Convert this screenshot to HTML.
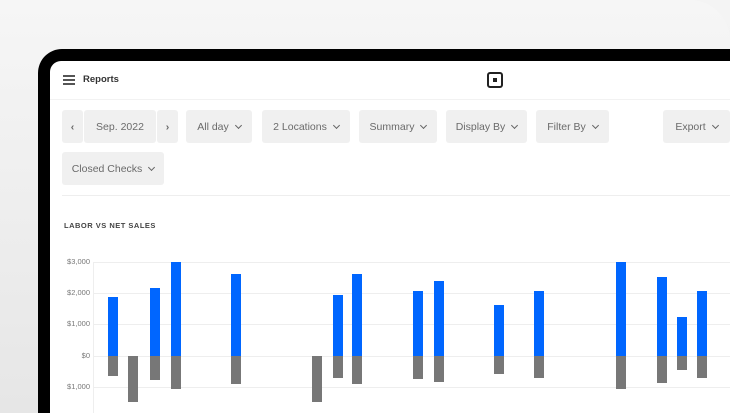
<!DOCTYPE html>
<html><head><style>
*{margin:0;padding:0;box-sizing:border-box}
html,body{width:730px;height:413px;overflow:hidden}
body{background:linear-gradient(#f4f4f4,#ebebeb);font-family:"Liberation Sans",sans-serif;position:relative}
.card{position:absolute;left:0;top:0;width:730px;height:413px;background:linear-gradient(#f6f6f6,#e6e6e6);border-radius:0 40px 0 0}
.bezel{position:absolute;left:38px;top:49px;width:692px;height:364px;background:#000;border-radius:24px 0 0 0}
.screen{position:absolute;left:50px;top:61px;width:680px;height:352px;background:#fff;border-radius:11px 0 0 0;overflow:hidden}
.abs{position:absolute}
.btn{position:absolute;height:33px;background:#f0f0f0;border-radius:3px;color:#6a6a6a;font-size:10.5px;display:flex;align-items:center;justify-content:center}
.chev{display:inline-block;width:5px;height:5px;border-right:1.5px solid #666;border-bottom:1.5px solid #666;transform:rotate(45deg);margin-left:7px;margin-top:-3px}
.grid{position:absolute;left:43px;width:640px;height:1px;background:#eee}
.yl{position:absolute;left:0;width:40px;text-align:right;font-size:7.5px;color:#777}
.b{position:absolute;width:10px;background:#0066ff}
.g{position:absolute;width:10px;background:#777}
</style></head><body>
<div class="card"></div>
<div class="bezel"></div>
<div class="screen">
 <div class="abs" style="left:13px;top:14px;width:12px;height:2px;background:#555;box-shadow:0 4px 0 #555,0 8px 0 #555"></div>
 <div class="abs" style="left:33px;top:13px;font-size:9.5px;font-weight:bold;color:#333">Reports</div>
 <div class="abs" style="left:437px;top:11px;width:16px;height:16px;border:2.5px solid #222;border-radius:3px"><div style="position:absolute;left:3.5px;top:3.5px;width:4px;height:4px;background:#222"></div></div>
 <div class="abs" style="left:0;top:38px;width:680px;height:1px;background:#f2f2f2"></div>
 <div class="btn" style="left:12px;top:49px;width:21px;font-weight:bold">‹</div>
 <div class="btn" style="left:34px;top:49px;width:72px">Sep. 2022</div>
 <div class="btn" style="left:107px;top:49px;width:21px;font-weight:bold">›</div>
 <div class="btn" style="left:136px;top:49px;width:66px">All day<span class="chev"></span></div>
 <div class="btn" style="left:212px;top:49px;width:88px">2 Locations<span class="chev"></span></div>
 <div class="btn" style="left:309px;top:49px;width:78px">Summary<span class="chev"></span></div>
 <div class="btn" style="left:396px;top:49px;width:81px">Display By<span class="chev"></span></div>
 <div class="btn" style="left:486px;top:49px;width:73px">Filter By<span class="chev"></span></div>
 <div class="btn" style="left:613px;top:49px;width:67px">Export<span class="chev"></span></div>
 <div class="btn" style="left:12px;top:91px;width:102px">Closed Checks<span class="chev"></span></div>
 <div class="abs" style="left:12px;top:134px;width:668px;height:1px;background:#eee"></div>
 <div class="abs" style="left:14px;top:160px;font-size:7.5px;font-weight:bold;letter-spacing:.5px;color:#444">LABOR VS NET SALES</div>
 <div class="grid" style="top:201px"></div><div class="yl" style="top:196px">$3,000</div>
 <div class="grid" style="top:232px"></div><div class="yl" style="top:227px">$2,000</div>
 <div class="grid" style="top:263px"></div><div class="yl" style="top:258px">$1,000</div>
 <div class="grid" style="top:295px"></div><div class="yl" style="top:290px">$0</div>
 <div class="grid" style="top:326px"></div><div class="yl" style="top:321px">$1,000</div>
 <div class="abs" style="left:43px;top:201px;width:1px;height:151px;background:#eee"></div>
 <div class="b" style="left:58px;top:236px;height:59px"></div><div class="g" style="left:58px;top:295px;height:20px"></div>
 <div class="g" style="left:78px;top:295px;height:46px"></div>
 <div class="b" style="left:100px;top:227px;height:68px"></div><div class="g" style="left:100px;top:295px;height:24px"></div>
 <div class="b" style="left:121px;top:201px;height:94px"></div><div class="g" style="left:121px;top:295px;height:33px"></div>
 <div class="b" style="left:181px;top:213px;height:82px"></div><div class="g" style="left:181px;top:295px;height:28px"></div>
 <div class="g" style="left:262px;top:295px;height:46px"></div>
 <div class="b" style="left:283px;top:234px;height:61px"></div><div class="g" style="left:283px;top:295px;height:22px"></div>
 <div class="b" style="left:302px;top:213px;height:82px"></div><div class="g" style="left:302px;top:295px;height:28px"></div>
 <div class="b" style="left:363px;top:230px;height:65px"></div><div class="g" style="left:363px;top:295px;height:23px"></div>
 <div class="b" style="left:384px;top:220px;height:75px"></div><div class="g" style="left:384px;top:295px;height:26px"></div>
 <div class="b" style="left:444px;top:244px;height:51px"></div><div class="g" style="left:444px;top:295px;height:18px"></div>
 <div class="b" style="left:484px;top:230px;height:65px"></div><div class="g" style="left:484px;top:295px;height:22px"></div>
 <div class="b" style="left:566px;top:201px;height:94px"></div><div class="g" style="left:566px;top:295px;height:33px"></div>
 <div class="b" style="left:607px;top:216px;height:79px"></div><div class="g" style="left:607px;top:295px;height:27px"></div>
 <div class="b" style="left:627px;top:256px;height:39px"></div><div class="g" style="left:627px;top:295px;height:14px"></div>
 <div class="b" style="left:647px;top:230px;height:65px"></div><div class="g" style="left:647px;top:295px;height:22px"></div>
</div>
</body></html>
